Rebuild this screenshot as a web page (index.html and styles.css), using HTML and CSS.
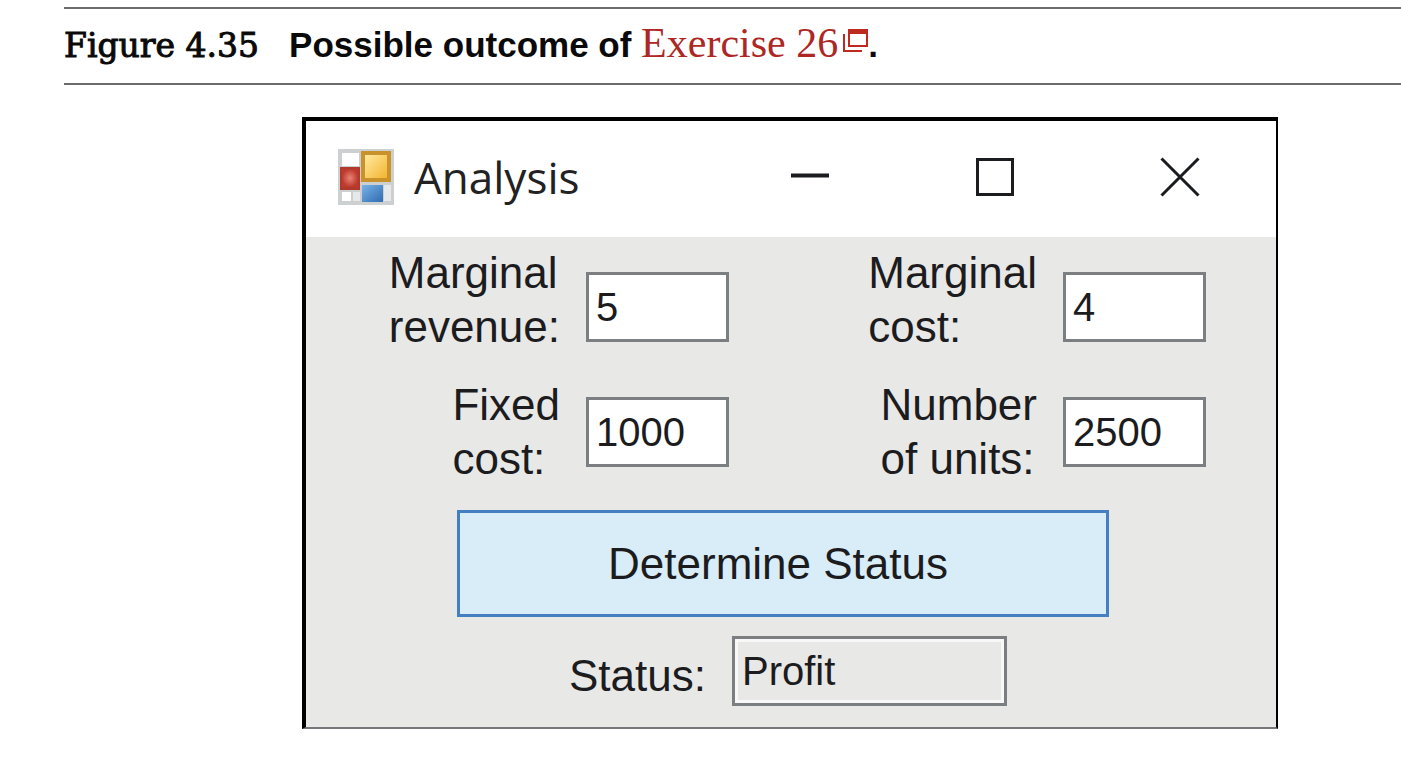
FILE: index.html
```html
<!DOCTYPE html>
<html lang="en">
<head>
<meta charset="utf-8">
<title>Figure 4.35</title>
<link rel="stylesheet" href="styles.css">
</head>
<body>
<figure class="figure">
  <figcaption class="caption">
    <span class="caption-number">Figure 4.35</span>
    <span class="caption-title">Possible outcome of <a class="caption-link" href="#exercise-26">Exercise 26<svg class="popup-icon" viewBox="0 0 25 25" aria-hidden="true"><path d="M1 6v17h18" fill="none" stroke="#bf2a20" stroke-width="2"/><path d="M5 1h20v18H5zM7 6v11h16V6z" fill="#bf2a20" fill-rule="evenodd"/></svg></a>.</span>
  </figcaption>
  <section class="window" aria-label="Analysis">
    <header class="titlebar">
      <svg class="app-icon" viewBox="0 0 56 56" aria-hidden="true">
        <defs>
          <linearGradient id="gold" x1="0" y1="0" x2="1" y2="1"><stop offset="0" stop-color="#ffeaa0"/><stop offset="1" stop-color="#f3b52f"/></linearGradient>
          <linearGradient id="blue" x1="0" y1="0" x2="1" y2="1"><stop offset="0" stop-color="#79b3e6"/><stop offset="1" stop-color="#2e6bb2"/></linearGradient>
          <radialGradient id="red"><stop offset="0" stop-color="#ea8377"/><stop offset="1" stop-color="#bd3a2c"/></radialGradient>
        </defs>
        <path fill="#cdd0d1" d="M0 0h56v56H0z"/>
        <path fill="#fff" d="M4 4h17v13H4zM4 43h9v9H4z"/>
        <path fill="#e6e8e9" d="M15 43h7v9h-7zM46 36h7v16h-7z"/>
        <path fill="#b0392d" d="M2 18h20v23H2z"/>
        <path fill="url(#red)" d="M4 20h16v18H4z"/>
        <path fill="#c9922b" d="M23 2h30v31H23z"/>
        <path fill="url(#gold)" d="M27 6h22v23H27z"/>
        <path fill="url(#blue)" d="M24 36h21v17H24z"/>
      </svg>
      <h1 class="window-title">Analysis</h1>
      <div class="window-controls">
        <button class="window-control" type="button" aria-label="Minimize"><svg class="control-icon" viewBox="0 0 40 40"><path d="M1 18.500h38" stroke-width="4"/></svg></button>
        <button class="window-control" type="button" aria-label="Maximize"><svg class="control-icon" viewBox="0 0 40 40"><path d="M2.500 2.500h35v35h-35z" stroke-width="3"/></svg></button>
        <button class="window-control" type="button" aria-label="Close"><svg class="control-icon" viewBox="0 0 40 40"><path d="M1.500 1.500l37 37M38.500 1.500l-37 37" stroke-width="3"/></svg></button>
      </div>
    </header>
    <form class="form">
      <div class="fields">
        <label class="label" for="revenue">Marginal<br>revenue:</label>
        <input class="box" id="revenue" type="text" value="5">
        <label class="label" for="cost">Marginal<br>cost:</label>
        <input class="box" id="cost" type="text" value="4">
        <label class="label" for="fixed">Fixed<br>cost:</label>
        <input class="box" id="fixed" type="text" value="1000">
        <label class="label" for="units">Number<br>of units:</label>
        <input class="box" id="units" type="text" value="2500">
      </div>
      <button class="submit" type="button">Determine Status</button>
      <div class="status">
        <label class="status-label" for="status">Status:</label>
        <input class="box box-readonly" id="status" type="text" value="Profit" readonly>
      </div>
    </form>
  </section>
</figure>
</body>
</html>
```
FILE: styles.css
```css
* {
  box-sizing: border-box;
}

body {
  margin: 0;
  background: #fff;
  color: #0a0a0a;
  font-family: "Liberation Sans", Arial, sans-serif;
}

.figure {
  margin: 7px 0 0 64px;
}

.caption {
  display: flex;
  align-items: baseline;
  gap: 30px;
  padding: 11px 0 12px;
  border-top: 2px solid #6c6c6e;
  border-bottom: 2px solid #6c6c6e;
  line-height: 50px;
  white-space: nowrap;
}

.caption-number {
  font-family: "DejaVu Serif", serif;
  font-size: 33px;
  -webkit-text-stroke: 1px #0a0a0a;
}

.caption-title {
  font-size: 35px;
  font-weight: 700;
}

.caption-link {
  color: #ad2724;
  font-family: "Liberation Serif", "Times New Roman", serif;
  font-size: 42px;
  font-weight: 400;
  line-height: 40px;
  text-decoration: none;
}

.popup-icon {
  width: 25px;
  height: 25px;
  margin-left: 5px;
  vertical-align: 4px;
}

.window {
  max-width: 976px;
  margin: 32px 0 0 238px;
  border: 4px solid #000;
  border-right-width: 2px;
  border-bottom: 2px solid #77777b;
  background: #e8e8e7;
}

.titlebar {
  display: flex;
  align-items: center;
  height: 116px;
  padding: 0 4px 4px 32px;
  background: #fff;
}

.app-icon {
  width: 56px;
  height: 56px;
  margin-right: 20px;
}

.window-title {
  flex: 1;
  margin: 0;
  color: #222;
  font-family: "Open Sans", "Noto Sans", sans-serif;
  font-size: 44px;
  font-weight: 400;
}

.window-controls {
  display: flex;
}

.window-control {
  width: 185px;
  padding: 0;
  border: 0;
  background: none;
}

.control-icon {
  display: block;
  width: 40px;
  height: 40px;
  margin: 0 auto;
  fill: none;
  stroke: #1b1c20;
}

.form {
  padding: 9px 0 21px;
  color: #1c1c1e;
  font-size: 44px;
  line-height: 54px;
}

.fields {
  display: grid;
  grid-template-columns: 254px 143px 1fr 143px;
  grid-template-rows: 122px 108px;
  gap: 10px 26px;
  align-items: center;
  padding-right: 70px;
}

.label {
  align-self: start;
  justify-self: end;
}

.box {
  width: 100%;
  height: 70px;
  padding: 0 7px;
  border: 3px solid #7b7f81;
  border-radius: 0;
  background: #fff;
  color: #1c1c1e;
  font-family: inherit;
  font-size: 40px;
}

.submit {
  display: block;
  width: calc(100% - 318px);
  height: 107px;
  margin: 24px 0 19px 151px;
  padding: 0 10px 0 0;
  border: 3px solid #437fc1;
  background: #d9edf8;
  color: #1c1c1e;
  font-family: inherit;
  font-size: 44px;
}

.status {
  display: flex;
  align-items: flex-end;
  gap: 26px;
  padding-left: 263px;
}

.status-label {
  line-height: 60px;
}

.box-readonly {
  width: 275px;
  background: #e8e8e7;
  box-shadow: inset 0 0 0 3px #f8f8f8;
}
```
